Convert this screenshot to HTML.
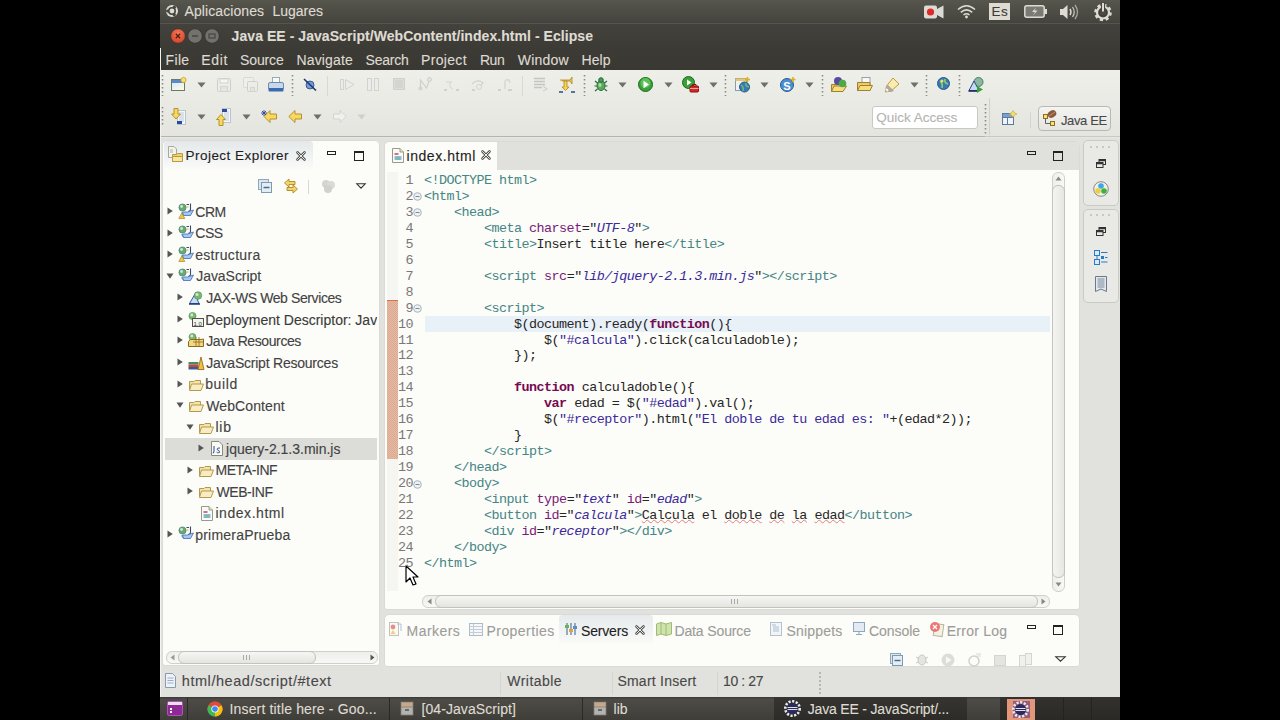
<!DOCTYPE html>
<html><head><meta charset="utf-8">
<style>
*{margin:0;padding:0;box-sizing:border-box}
html,body{width:1280px;height:720px;overflow:hidden;background:#000;font-family:"Liberation Sans",sans-serif;position:relative}
.a{position:absolute}
.t{position:absolute;white-space:pre;-webkit-text-stroke:0.12px currentColor}
svg.a{overflow:visible}
.code{position:absolute;font-family:"Liberation Mono",monospace;font-size:13.4px;line-height:15.95px;letter-spacing:-0.53px;white-space:pre;color:#262626}
.tg{color:#448585}.an{color:#7a1a78}.av{color:#3a2a9c;font-style:italic}.kw{color:#780a50;font-weight:bold}.st{color:#3a2a9c}
.sq{text-decoration:underline wavy #e08080;text-decoration-thickness:1px;text-underline-offset:0px}
.ln{position:absolute;font-family:"Liberation Mono",monospace;font-size:13.4px;line-height:15.95px;letter-spacing:-0.53px;white-space:pre;color:#787878;text-align:right;width:40px}
</style></head><body>
<div class="a" style="left:160px;top:0px;width:960px;height:720px;background:#e1e1dd"></div>
<div class="a" style="left:160px;top:0px;width:960px;height:23px;background:linear-gradient(#57564d,#44433d)"></div>
<div class="a" style="left:160px;top:23px;width:960px;height:47px;background:linear-gradient(#43423c,#3c3b36 50%,#393833)"></div>
<div class="a" style="left:160px;top:23px;width:960px;height:1px;background:#56554d"></div>
<div class="a" style="left:160px;top:70px;width:960px;height:66px;background:linear-gradient(#efefea,#e5e5e0)"></div>
<div class="a" style="left:160px;top:136px;width:825px;height:1px;background:#b4b4b1"></div>
<div class="a" style="left:985px;top:136px;width:135px;height:1px;background:#c8c8c5"></div>
<div class="a" style="left:160px;top:137px;width:960px;height:1px;background:#e6e6e3"></div>
<svg class="a" style="left:165px;top:4px;" width="14" height="14" viewBox="0 0 14 14"><circle cx="7" cy="7" r="6" fill="#dfdbd2"/><circle cx="7" cy="7" r="3.2" fill="none" stroke="#46453f" stroke-width="1.6"/><circle cx="2.6" cy="7" r="1.6" fill="#46453f"/><circle cx="9.3" cy="3.2" r="1.6" fill="#46453f"/><circle cx="9.3" cy="10.8" r="1.6" fill="#46453f"/></svg>
<div class="t" style="left:184.60px;top:3.95px;font-size:14px;line-height:14px;color:#dfdbd2;font-weight:400;font-style:normal;font-family:'Liberation Sans';letter-spacing:0.073px;">Aplicaciones</div>
<div class="t" style="left:272.60px;top:3.95px;font-size:14px;line-height:14px;color:#dfdbd2;font-weight:400;font-style:normal;font-family:'Liberation Sans';letter-spacing:-0.033px;">Lugares</div>
<svg class="a" style="left:170px;top:28px;" width="48" height="16" viewBox="0 0 48 16"><defs><radialGradient id="rg" cx="50%" cy="35%" r="60%"><stop offset="0" stop-color="#f07b5a"/><stop offset="1" stop-color="#d9452b"/></radialGradient></defs><circle cx="8" cy="8" r="7.3" fill="url(#rg)" stroke="#2e2d2a" stroke-width="0.6"/><path d="M5.8 5.8L10.2 10.2M10.2 5.8L5.8 10.2" stroke="#5a1a10" stroke-width="1.3"/><circle cx="25" cy="8" r="7.2" fill="#73726d" stroke="#2e2d2a" stroke-width="0.6"/><path d="M22 8H28" stroke="#4a4945" stroke-width="1.6"/><circle cx="42" cy="8" r="7.2" fill="#73726d" stroke="#2e2d2a" stroke-width="0.6"/><rect x="39" y="6" width="6" height="4" fill="none" stroke="#4a4945" stroke-width="1.3"/></svg>
<div class="t" style="left:231.60px;top:29.05px;font-size:14px;line-height:14px;color:#dfdbd2;font-weight:700;font-style:normal;font-family:'Liberation Sans';letter-spacing:0.059px;">Java EE - JavaScript/WebContent/index.html - Eclipse</div>
<div class="t" style="left:165.60px;top:52.95px;font-size:14px;line-height:14px;color:#dfdbd2;font-weight:400;font-style:normal;font-family:'Liberation Sans';letter-spacing:0.333px;">File</div>
<div class="t" style="left:201.20px;top:52.95px;font-size:14px;line-height:14px;color:#dfdbd2;font-weight:400;font-style:normal;font-family:'Liberation Sans';letter-spacing:0.667px;">Edit</div>
<div class="t" style="left:240.00px;top:52.95px;font-size:14px;line-height:14px;color:#dfdbd2;font-weight:400;font-style:normal;font-family:'Liberation Sans';letter-spacing:-0.120px;">Source</div>
<div class="t" style="left:296.50px;top:52.95px;font-size:14px;line-height:14px;color:#dfdbd2;font-weight:400;font-style:normal;font-family:'Liberation Sans';letter-spacing:0.143px;">Navigate</div>
<div class="t" style="left:365.50px;top:52.95px;font-size:14px;line-height:14px;color:#dfdbd2;font-weight:400;font-style:normal;font-family:'Liberation Sans';letter-spacing:-0.200px;">Search</div>
<div class="t" style="left:421.00px;top:52.95px;font-size:14px;line-height:14px;color:#dfdbd2;font-weight:400;font-style:normal;font-family:'Liberation Sans';letter-spacing:0.333px;">Project</div>
<div class="t" style="left:479.90px;top:52.95px;font-size:14px;line-height:14px;color:#dfdbd2;font-weight:400;font-style:normal;font-family:'Liberation Sans';letter-spacing:-0.400px;">Run</div>
<div class="t" style="left:517.80px;top:52.95px;font-size:14px;line-height:14px;color:#dfdbd2;font-weight:400;font-style:normal;font-family:'Liberation Sans';letter-spacing:0.200px;">Window</div>
<div class="t" style="left:581.40px;top:52.95px;font-size:14px;line-height:14px;color:#dfdbd2;font-weight:400;font-style:normal;font-family:'Liberation Sans';letter-spacing:0.133px;">Help</div>
<div class="a" style="left:162px;top:140px;width:218px;height:526px;background:#fcfcf8;border:1px solid #dadad6;border-radius:5px 5px 3px 3px"></div>
<div class="a" style="left:164px;top:141px;width:149px;height:29px;background:linear-gradient(#e4e8ea,#f4f6f5 70%,#fcfcf8);border-radius:4px 4px 0 0"></div>
<div class="a" style="left:384px;top:141px;width:696px;height:469px;background:#fcfcf8;border:1px solid #dadad6;border-radius:5px 5px 3px 3px"></div>
<div class="a" style="left:497px;top:142px;width:582px;height:28px;background:#e0e0dd;border-radius:0 4px 0 0"></div>
<div class="a" style="left:384px;top:614px;width:696px;height:53px;background:#fcfcf8;border:1px solid #dadad6;border-radius:5px 5px 3px 3px"></div>
<div class="a" style="left:559px;top:615px;width:94px;height:30px;background:linear-gradient(#e6eaec,#f4f6f5 70%,#fcfcf8);border-radius:4px 4px 0 0"></div>
<div class="a" style="left:1083px;top:140px;width:36px;height:66px;background:#e9e9e6;border:1px solid #c9c9c6;border-radius:5px"></div>
<div class="a" style="left:1083px;top:209px;width:36px;height:94px;background:#e9e9e6;border:1px solid #c9c9c6;border-radius:5px"></div>
<div class="a" style="left:160px;top:697px;width:960px;height:23px;background:linear-gradient(#3a3933,#4c4b45 10%,#45443e 60%,#3e3d38)"></div>
<div class="t" style="left:406.50px;top:149.15px;font-size:14px;line-height:14px;color:#1e1e1e;font-weight:400;font-style:normal;font-family:'Liberation Sans';letter-spacing:0.556px;">index.html</div>
<svg class="a" style="left:392px;top:148px;" width="12" height="15" viewBox="0 0 12 15"><path d="M0.5 0.5H8L11.5 4V14.5H0.5Z" fill="#fbfbf6" stroke="#9a9a8a"/><path d="M8 0.5V4H11.5" fill="#e8e4c8" stroke="#9a9a8a"/><rect x="2.5" y="5" width="4" height="2" fill="#d07090"/><rect x="2.5" y="8" width="7" height="4" fill="#6a9ad0" opacity="0.7"/><rect x="4" y="9" width="4" height="3" fill="#6abf9a" opacity="0.7"/></svg>
<svg class="a" style="left:481px;top:150px;" width="10" height="10" viewBox="0 0 10 10"><path d="M1.5 1.5L8.5 8.5M8.5 1.5L1.5 8.5" stroke="#555" stroke-width="2.6" stroke-linecap="round"/><path d="M1.5 1.5L8.5 8.5M8.5 1.5L1.5 8.5" stroke="#fcfcf8" stroke-width="0.9" stroke-linecap="round"/></svg>
<div class="a" style="left:1027px;top:151px;width:9px;height:4px;border:1.2px solid #222"></div>
<div class="a" style="left:1053px;top:151px;width:10px;height:10px;border:1.2px solid #222;border-top-width:2.4px"></div>
<div class="a" style="left:387px;top:172px;width:11px;height:419px;background:#f5f5f1"></div>
<div class="a" style="left:387px;top:300px;width:11px;height:159px;background:#dfb29c;background-image:repeating-conic-gradient(#dba890 0 25%,#e6bba6 0 50%);background-size:2px 2px"></div>
<div class="a" style="left:387px;top:300px;width:11px;height:1px;background:#e2704e"></div>
<div class="a" style="left:425px;top:316px;width:625px;height:16px;background:#e8f0f8"></div>
<div class="code" style="left:424px;top:173px"><span class="tg">&lt;!DOCTYPE html&gt;</span>
<span class="tg">&lt;html&gt;</span>
    <span class="tg">&lt;head&gt;</span>
        <span class="tg">&lt;meta </span><span class="an">charset</span>=&quot;<span class="av">UTF-8</span>&quot;<span class="tg">&gt;</span>
        <span class="tg">&lt;title&gt;</span>Insert title here<span class="tg">&lt;/title&gt;</span>

        <span class="tg">&lt;script </span><span class="an">src</span>=&quot;<span class="av">lib/jquery-2.1.3.min.js</span>&quot;<span class="tg">&gt;&lt;/script&gt;</span>

        <span class="tg">&lt;script&gt;</span>
            $(document).ready(<span class="kw">function</span>(){
                $(<span class="st">&quot;#calcula&quot;</span>).click(calculadoble);
            });

            <span class="kw">function</span> calculadoble(){
                <span class="kw">var</span> edad = $(<span class="st">&quot;#edad&quot;</span>).val();
                $(<span class="st">&quot;#receptor&quot;</span>).html(<span class="st">&quot;El doble de tu edad es: &quot;</span>+(edad*2));
            }
        <span class="tg">&lt;/script&gt;</span>
    <span class="tg">&lt;/head&gt;</span>
    <span class="tg">&lt;body&gt;</span>
        <span class="tg">&lt;input </span><span class="an">type</span>=&quot;<span class="av">text</span>&quot; <span class="an">id</span>=&quot;<span class="av">edad</span>&quot;<span class="tg">&gt;</span>
        <span class="tg">&lt;button </span><span class="an">id</span>=&quot;<span class="av">calcula</span>&quot;<span class="tg">&gt;</span><span class="sq">Calcula</span> el <span class="sq">doble</span> <span class="sq">de</span> <span class="sq">la</span> <span class="sq">edad</span><span class="tg">&lt;/button&gt;</span>
        <span class="tg">&lt;div </span><span class="an">id</span>=&quot;<span class="av">receptor</span>&quot;<span class="tg">&gt;&lt;/div&gt;</span>
    <span class="tg">&lt;/body&gt;</span>
<span class="tg">&lt;/html&gt;</span></div>
<div class="ln" style="left:373px;top:173px">1
2
3
4
5
6
7
8
9
10
11
12
13
14
15
16
17
18
19
20
21
22
23
24
25</div>
<svg class="a" style="left:413px;top:192px;" width="9" height="9" viewBox="0 0 9 9"><circle cx="4.5" cy="4.5" r="3.8" fill="#eef2f4" stroke="#a8b4bc" stroke-width="1"/><path d="M2.5 4.5H6.5" stroke="#7a8890" stroke-width="1"/></svg>
<svg class="a" style="left:413px;top:208px;" width="9" height="9" viewBox="0 0 9 9"><circle cx="4.5" cy="4.5" r="3.8" fill="#eef2f4" stroke="#a8b4bc" stroke-width="1"/><path d="M2.5 4.5H6.5" stroke="#7a8890" stroke-width="1"/></svg>
<svg class="a" style="left:413px;top:304px;" width="9" height="9" viewBox="0 0 9 9"><circle cx="4.5" cy="4.5" r="3.8" fill="#eef2f4" stroke="#a8b4bc" stroke-width="1"/><path d="M2.5 4.5H6.5" stroke="#7a8890" stroke-width="1"/></svg>
<svg class="a" style="left:413px;top:480px;" width="9" height="9" viewBox="0 0 9 9"><circle cx="4.5" cy="4.5" r="3.8" fill="#eef2f4" stroke="#a8b4bc" stroke-width="1"/><path d="M2.5 4.5H6.5" stroke="#7a8890" stroke-width="1"/></svg>
<div class="a" style="left:1052px;top:172px;width:13px;height:420px;background:linear-gradient(90deg,#eeeeeb,#f8f8f6);border:1px solid #cfcfcc;border-radius:6px"></div>
<div class="a" style="left:1052px;top:185px;width:13px;height:393px;background:linear-gradient(90deg,#f4f4f2,#e6e6e3);border:1px solid #c2c2bf;border-radius:6px"></div>
<svg class="a" style="left:1055px;top:176px;" width="7" height="5" viewBox="0 0 7 5"><path d="M0.5 4.5L3.5 0.5L6.5 4.5Z" fill="#888"/></svg>
<svg class="a" style="left:1055px;top:582px;" width="7" height="5" viewBox="0 0 7 5"><path d="M0.5 0.5L3.5 4.5L6.5 0.5Z" fill="#888"/></svg>
<div class="a" style="left:422px;top:595px;width:628px;height:13px;background:linear-gradient(#eeeeeb,#f8f8f6);border:1px solid #cfcfcc;border-radius:6px"></div>
<div class="a" style="left:435px;top:595px;width:603px;height:13px;background:linear-gradient(#f6f6f4,#e4e4e1);border:1px solid #c2c2bf;border-radius:6px"></div>
<svg class="a" style="left:427px;top:598px;" width="5" height="7" viewBox="0 0 5 7"><path d="M4.5 0.5L0.5 3.5L4.5 6.5Z" fill="#888"/></svg>
<svg class="a" style="left:1041px;top:598px;" width="5" height="7" viewBox="0 0 5 7"><path d="M0.5 0.5L4.5 3.5L0.5 6.5Z" fill="#888"/></svg>
<svg class="a" style="left:730px;top:599px;" width="9" height="5" viewBox="0 0 9 5"><path d="M1.5 0V5M4.5 0V5M7.5 0V5" stroke="#aaa" stroke-width="1"/></svg>
<svg class="a" style="left:405px;top:565px;" width="14" height="21" viewBox="0 0 14 21"><path d="M1 1V17L5 13L8 20L11 19L8 12H13Z" fill="#fff" stroke="#000" stroke-width="1.2" stroke-linejoin="round"/></svg>
<div class="t" style="left:185.50px;top:149.37px;font-size:13.5px;line-height:13.5px;color:#1e1e1e;font-weight:400;font-style:normal;font-family:'Liberation Sans';letter-spacing:0.467px;">Project Explorer</div>
<svg class="a" style="left:168px;top:146px;" width="16" height="17" viewBox="0 0 16 17"><path d="M0.5 0.5H6L8.5 3V11.5H0.5Z" fill="#f4f4ee" stroke="#a8a898"/><path d="M2 4H5M2 6H5" stroke="#b0b0a0"/><path d="M4.5 8.5H8.5L9.5 7.5H14.5V15.5H4.5Z" fill="#f0d070" stroke="#b89a40"/><path d="M4.5 10.5H14.5V15.5H4.5Z" fill="#f8e6a0" stroke="#b89a40"/></svg>
<svg class="a" style="left:296px;top:151px;" width="10" height="10" viewBox="0 0 10 10"><path d="M1.5 1.5L8.5 8.5M8.5 1.5L1.5 8.5" stroke="#555" stroke-width="2.6" stroke-linecap="round"/><path d="M1.5 1.5L8.5 8.5M8.5 1.5L1.5 8.5" stroke="#fcfcf8" stroke-width="0.9" stroke-linecap="round"/></svg>
<div class="a" style="left:327px;top:151px;width:9px;height:4px;border:1.2px solid #222"></div>
<div class="a" style="left:354px;top:151px;width:10px;height:10px;border:1.2px solid #222;border-top-width:2.4px"></div>
<svg class="a" style="left:258px;top:179px;" width="14" height="14" viewBox="0 0 14 14"><rect x="0.5" y="0.5" width="10" height="10" fill="#dbe6ef" stroke="#90a8bc"/><rect x="3.5" y="3.5" width="10" height="10" fill="#e4edf4" stroke="#7d9ab2"/><path d="M5.5 8.5H11.5" stroke="#4a6a8a" stroke-width="1.5"/></svg>
<svg class="a" style="left:283px;top:178px;" width="16" height="16" viewBox="0 0 16 16"><path d="M6 1L1.5 5L6 9V6.5H12V3.5H6Z" fill="#f4d46a" stroke="#b08a20" stroke-width="0.9"/><path d="M10 7L14.5 11L10 15V12.5H4V9.5H10Z" fill="#f4d46a" stroke="#b08a20" stroke-width="0.9"/></svg>
<div class="a" style="left:308px;top:180px;width:1px;height:14px;background:#d8d8d4"></div>
<svg class="a" style="left:321px;top:179px;" width="15" height="15" viewBox="0 0 15 15"><circle cx="5" cy="5" r="4" fill="#d4d4d0"/><circle cx="10" cy="6" r="4" fill="#dadad6"/><circle cx="7" cy="10" r="4" fill="#d0d0cc"/></svg>
<svg class="a" style="left:356px;top:183px;" width="10" height="6" viewBox="0 0 10 6"><path d="M0.8 0.8H9.2L5 5.2Z" fill="#fcfcf8" stroke="#333" stroke-width="1.1"/></svg>
<div class="a" style="left:165px;top:438px;width:212px;height:22px;background:#dcdcd8"></div>
<svg class="a" style="left:166.5px;top:207px;" width="6" height="8" viewBox="0 0 6 8"><path d="M0.5 0.5L5.8 4L0.5 7.5Z" fill="#555"/></svg>
<svg class="a" style="left:178.2px;top:203px;" width="16" height="16" viewBox="0 0 16 16"><circle cx="4.5" cy="4.5" r="3.6" fill="#6aa87a" stroke="#3a7a5a" stroke-width="0.6"/><circle cx="3.6" cy="3.5" r="1.4" fill="#c8e8d0"/><path d="M8.5 1.5H11M12.5 0.5V6.5Q12.5 8.5 10 8.5" stroke="#3a4a6a" stroke-width="1.1" fill="none"/><path d="M8.5 4H10.5" stroke="#e0b040" stroke-width="1"/><path d="M4.5 9H9.5L15.5 7L12.5 12.5H5.5Z" fill="#a8c8f0" stroke="#4a7ac0" stroke-width="0.9"/><path d="M5.5 12.5L3.5 9.5" stroke="#4a7ac0" stroke-width="0.9"/><path d="M0.8 15.5L3.8 10L6.8 15.5Z" fill="#f0c848" stroke="#b08a20" stroke-width="0.7"/></svg>
<div class="t" style="left:195.20px;top:204.75px;font-size:14px;line-height:14px;color:#424242;font-weight:400;font-style:normal;font-family:'Liberation Sans';letter-spacing:-0.400px;">CRM</div>
<svg class="a" style="left:166.5px;top:229px;" width="6" height="8" viewBox="0 0 6 8"><path d="M0.5 0.5L5.8 4L0.5 7.5Z" fill="#555"/></svg>
<svg class="a" style="left:178.2px;top:225px;" width="16" height="16" viewBox="0 0 16 16"><circle cx="4.5" cy="4.5" r="3.6" fill="#6aa87a" stroke="#3a7a5a" stroke-width="0.6"/><circle cx="3.6" cy="3.5" r="1.4" fill="#c8e8d0"/><path d="M8.5 1.5H11M12.5 0.5V6.5Q12.5 8.5 10 8.5" stroke="#3a4a6a" stroke-width="1.1" fill="none"/><path d="M8.5 4H10.5" stroke="#e0b040" stroke-width="1"/><path d="M4.5 9H9.5L15.5 7L12.5 12.5H5.5Z" fill="#a8c8f0" stroke="#4a7ac0" stroke-width="0.9"/><path d="M5.5 12.5L3.5 9.5" stroke="#4a7ac0" stroke-width="0.9"/></svg>
<div class="t" style="left:195.20px;top:226.30px;font-size:14px;line-height:14px;color:#424242;font-weight:400;font-style:normal;font-family:'Liberation Sans';letter-spacing:-0.400px;">CSS</div>
<svg class="a" style="left:166.5px;top:250px;" width="6" height="8" viewBox="0 0 6 8"><path d="M0.5 0.5L5.8 4L0.5 7.5Z" fill="#555"/></svg>
<svg class="a" style="left:178.2px;top:246px;" width="16" height="16" viewBox="0 0 16 16"><circle cx="4.5" cy="4.5" r="3.6" fill="#6aa87a" stroke="#3a7a5a" stroke-width="0.6"/><circle cx="3.6" cy="3.5" r="1.4" fill="#c8e8d0"/><path d="M8.5 1.5H11M12.5 0.5V6.5Q12.5 8.5 10 8.5" stroke="#3a4a6a" stroke-width="1.1" fill="none"/><path d="M8.5 4H10.5" stroke="#e0b040" stroke-width="1"/><path d="M4.5 9H9.5L15.5 7L12.5 12.5H5.5Z" fill="#a8c8f0" stroke="#4a7ac0" stroke-width="0.9"/><path d="M5.5 12.5L3.5 9.5" stroke="#4a7ac0" stroke-width="0.9"/><path d="M0.8 15.5L3.8 10L6.8 15.5Z" fill="#f0c848" stroke="#b08a20" stroke-width="0.7"/></svg>
<div class="t" style="left:195.20px;top:247.85px;font-size:14px;line-height:14px;color:#424242;font-weight:400;font-style:normal;font-family:'Liberation Sans';letter-spacing:0.306px;">estructura</div>
<svg class="a" style="left:165.5px;top:273px;" width="8" height="6" viewBox="0 0 8 6"><path d="M0.5 0.5H7.5L4 5.8Z" fill="#555"/></svg>
<svg class="a" style="left:178.2px;top:268px;" width="16" height="16" viewBox="0 0 16 16"><circle cx="4.5" cy="4.5" r="3.6" fill="#6aa87a" stroke="#3a7a5a" stroke-width="0.6"/><circle cx="3.6" cy="3.5" r="1.4" fill="#c8e8d0"/><path d="M8.5 1.5H11M12.5 0.5V6.5Q12.5 8.5 10 8.5" stroke="#3a4a6a" stroke-width="1.1" fill="none"/><path d="M8.5 4H10.5" stroke="#e0b040" stroke-width="1"/><path d="M4.5 9H9.5L15.5 7L12.5 12.5H5.5Z" fill="#a8c8f0" stroke="#4a7ac0" stroke-width="0.9"/><path d="M5.5 12.5L3.5 9.5" stroke="#4a7ac0" stroke-width="0.9"/></svg>
<div class="t" style="left:196.20px;top:269.40px;font-size:14px;line-height:14px;color:#424242;font-weight:400;font-style:normal;font-family:'Liberation Sans';letter-spacing:-0.044px;">JavaScript</div>
<svg class="a" style="left:176.8px;top:293px;" width="6" height="8" viewBox="0 0 6 8"><path d="M0.5 0.5L5.8 4L0.5 7.5Z" fill="#555"/></svg>
<svg class="a" style="left:188.2px;top:289px;" width="16" height="16" viewBox="0 0 16 16"><path d="M1.5 14.5L7 5L11 14.5Z" fill="#c8dcf4" stroke="#3a5a9a"/><circle cx="10" cy="6.5" r="3.8" fill="#7ab870" stroke="#4a8a60" stroke-width="0.6"/><circle cx="9" cy="5.5" r="1.5" fill="#d0ecc8"/><path d="M1 15H12" stroke="#1a3a7a" stroke-width="1.5"/></svg>
<div class="t" style="left:206.20px;top:290.95px;font-size:14px;line-height:14px;color:#424242;font-weight:400;font-style:normal;font-family:'Liberation Sans';letter-spacing:-0.400px;">JAX-WS Web Services</div>
<svg class="a" style="left:176.8px;top:315px;" width="6" height="8" viewBox="0 0 6 8"><path d="M0.5 0.5L5.8 4L0.5 7.5Z" fill="#555"/></svg>
<svg class="a" style="left:188.2px;top:311px;" width="16" height="16" viewBox="0 0 16 16"><circle cx="4.5" cy="5" r="3.6" fill="#7ab870" stroke="#4a8a60" stroke-width="0.6"/><circle cx="3.8" cy="4" r="1.4" fill="#d0ecc8"/><rect x="4.5" y="7.5" width="11" height="8" fill="#f4f4ee" stroke="#505048"/><text x="5.5" y="14.5" font-size="6" font-family="Liberation Sans" fill="#333">1.0</text></svg>
<div class="a" style="left:205.2px;top:308px;width:171.8px;height:20px;overflow:hidden">
<div class="t" style="left:0.00px;top:4.50px;font-size:14px;line-height:14px;color:#3a3a3a;font-weight:400;font-style:normal;font-family:'Liberation Sans';letter-spacing:0.000px;">Deployment Descriptor: JavaScript</div>
</div>
<svg class="a" style="left:176.8px;top:336px;" width="6" height="8" viewBox="0 0 6 8"><path d="M0.5 0.5L5.8 4L0.5 7.5Z" fill="#555"/></svg>
<svg class="a" style="left:188.2px;top:332px;" width="16" height="16" viewBox="0 0 16 16"><circle cx="4.5" cy="5" r="3.5" fill="#7ab870" stroke="#4a8a60" stroke-width="0.6"/><circle cx="3.8" cy="4" r="1.4" fill="#d0ecc8"/><path d="M0.5 9.5L2.5 7.5H13L15.5 7V14.5H0.5Z" fill="#f4d880" stroke="#8a6a20"/><path d="M8 5V14M11 5V14M5 10H15" stroke="#8a6a20" stroke-width="0.8"/></svg>
<div class="t" style="left:206.20px;top:334.05px;font-size:14px;line-height:14px;color:#424242;font-weight:400;font-style:normal;font-family:'Liberation Sans';letter-spacing:-0.400px;">Java Resources</div>
<svg class="a" style="left:176.8px;top:358px;" width="6" height="8" viewBox="0 0 6 8"><path d="M0.5 0.5L5.8 4L0.5 7.5Z" fill="#555"/></svg>
<svg class="a" style="left:188.2px;top:354px;" width="16" height="16" viewBox="0 0 16 16"><rect x="0.5" y="8" width="10" height="2.5" fill="#4a8a5a"/><rect x="0.5" y="10.5" width="10" height="2.5" fill="#c04a3a"/><rect x="0.5" y="13" width="10" height="2.5" fill="#3a5a9a"/><path d="M10 15.5L13 3L16 15.5Z" fill="#f0c040" stroke="#906010" stroke-width="0.8"/></svg>
<div class="t" style="left:206.20px;top:355.60px;font-size:14px;line-height:14px;color:#424242;font-weight:400;font-style:normal;font-family:'Liberation Sans';letter-spacing:-0.221px;">JavaScript Resources</div>
<svg class="a" style="left:176.8px;top:380px;" width="6" height="8" viewBox="0 0 6 8"><path d="M0.5 0.5L5.8 4L0.5 7.5Z" fill="#555"/></svg>
<svg class="a" style="left:188.7px;top:380px;" width="15" height="11" viewBox="0 0 15 11"><path d="M0.5 1.5H5L6 0.5H11.5V9.5H0.5Z" fill="#f4e2a8" stroke="#b49a50"/><path d="M0.5 10.5L2.5 4H14.5L12 10.5Z" fill="#f8ecc0" stroke="#b49a50"/></svg>
<div class="t" style="left:205.20px;top:377.15px;font-size:14px;line-height:14px;color:#424242;font-weight:400;font-style:normal;font-family:'Liberation Sans';letter-spacing:0.600px;">build</div>
<svg class="a" style="left:175.8px;top:402px;" width="8" height="6" viewBox="0 0 8 6"><path d="M0.5 0.5H7.5L4 5.8Z" fill="#555"/></svg>
<svg class="a" style="left:188.7px;top:401px;" width="15" height="11" viewBox="0 0 15 11"><path d="M0.5 1.5H5L6 0.5H11.5V9.5H0.5Z" fill="#f4e2a8" stroke="#b49a50"/><path d="M0.5 10.5L2.5 4H14.5L12 10.5Z" fill="#f8ecc0" stroke="#b49a50"/></svg>
<div class="t" style="left:206.20px;top:398.70px;font-size:14px;line-height:14px;color:#424242;font-weight:400;font-style:normal;font-family:'Liberation Sans';letter-spacing:0.111px;">WebContent</div>
<svg class="a" style="left:186.1px;top:424px;" width="8" height="6" viewBox="0 0 8 6"><path d="M0.5 0.5H7.5L4 5.8Z" fill="#555"/></svg>
<svg class="a" style="left:198.9px;top:423px;" width="15" height="11" viewBox="0 0 15 11"><path d="M0.5 1.5H5L6 0.5H11.5V9.5H0.5Z" fill="#f4e2a8" stroke="#b49a50"/><path d="M0.5 10.5L2.5 4H14.5L12 10.5Z" fill="#f8ecc0" stroke="#b49a50"/></svg>
<div class="t" style="left:215.40px;top:420.25px;font-size:14px;line-height:14px;color:#424242;font-weight:400;font-style:normal;font-family:'Liberation Sans';letter-spacing:0.800px;">lib</div>
<svg class="a" style="left:197.5px;top:444px;" width="6" height="8" viewBox="0 0 6 8"><path d="M0.5 0.5L5.8 4L0.5 7.5Z" fill="#555"/></svg>
<svg class="a" style="left:211.1px;top:441px;" width="12" height="15" viewBox="0 0 12 15"><path d="M0.5 0.5H8L11.5 4V14.5H0.5Z" fill="#fbfbf6" stroke="#8a8a7a"/><path d="M3 5V10Q3 12 1.8 12" stroke="#3a5aa0" stroke-width="1.1" fill="none"/><path d="M9 7Q6 6.5 6 8.5Q9 9.5 8.5 11.5Q6.5 12.5 5.5 11" stroke="#3a5aa0" stroke-width="1" fill="none"/></svg>
<div class="t" style="left:226.10px;top:441.80px;font-size:14px;line-height:14px;color:#424242;font-weight:400;font-style:normal;font-family:'Liberation Sans';letter-spacing:0.000px;">jquery-2.1.3.min.js</div>
<svg class="a" style="left:187.1px;top:466px;" width="6" height="8" viewBox="0 0 6 8"><path d="M0.5 0.5L5.8 4L0.5 7.5Z" fill="#555"/></svg>
<svg class="a" style="left:198.9px;top:466px;" width="15" height="11" viewBox="0 0 15 11"><path d="M0.5 1.5H5L6 0.5H11.5V9.5H0.5Z" fill="#f4e2a8" stroke="#b49a50"/><path d="M0.5 10.5L2.5 4H14.5L12 10.5Z" fill="#f8ecc0" stroke="#b49a50"/></svg>
<div class="t" style="left:215.40px;top:463.35px;font-size:14px;line-height:14px;color:#424242;font-weight:400;font-style:normal;font-family:'Liberation Sans';letter-spacing:-0.400px;">META-INF</div>
<svg class="a" style="left:187.1px;top:487px;" width="6" height="8" viewBox="0 0 6 8"><path d="M0.5 0.5L5.8 4L0.5 7.5Z" fill="#555"/></svg>
<svg class="a" style="left:198.9px;top:487px;" width="15" height="11" viewBox="0 0 15 11"><path d="M0.5 1.5H5L6 0.5H11.5V9.5H0.5Z" fill="#f4e2a8" stroke="#b49a50"/><path d="M0.5 10.5L2.5 4H14.5L12 10.5Z" fill="#f8ecc0" stroke="#b49a50"/></svg>
<div class="t" style="left:216.40px;top:484.90px;font-size:14px;line-height:14px;color:#424242;font-weight:400;font-style:normal;font-family:'Liberation Sans';letter-spacing:-0.400px;">WEB-INF</div>
<svg class="a" style="left:201.4px;top:506px;" width="12" height="15" viewBox="0 0 12 15"><path d="M0.5 0.5H8L11.5 4V14.5H0.5Z" fill="#fbfbf6" stroke="#9a9a8a"/><path d="M8 0.5V4H11.5" fill="#e8e4c8" stroke="#9a9a8a"/><rect x="2.5" y="5" width="4" height="2" fill="#d07090"/><rect x="2.5" y="8" width="7" height="4" fill="#6a9ad0" opacity="0.7"/><rect x="4" y="9" width="4" height="3" fill="#6abf9a" opacity="0.7"/></svg>
<div class="t" style="left:215.40px;top:506.45px;font-size:14px;line-height:14px;color:#424242;font-weight:400;font-style:normal;font-family:'Liberation Sans';letter-spacing:0.556px;">index.html</div>
<svg class="a" style="left:166.5px;top:530px;" width="6" height="8" viewBox="0 0 6 8"><path d="M0.5 0.5L5.8 4L0.5 7.5Z" fill="#555"/></svg>
<svg class="a" style="left:178.2px;top:526px;" width="16" height="16" viewBox="0 0 16 16"><circle cx="4.5" cy="4.5" r="3.6" fill="#6aa87a" stroke="#3a7a5a" stroke-width="0.6"/><circle cx="3.6" cy="3.5" r="1.4" fill="#c8e8d0"/><path d="M8.5 1.5H11M12.5 0.5V6.5Q12.5 8.5 10 8.5" stroke="#3a4a6a" stroke-width="1.1" fill="none"/><path d="M8.5 4H10.5" stroke="#e0b040" stroke-width="1"/><path d="M4.5 9H9.5L15.5 7L12.5 12.5H5.5Z" fill="#a8c8f0" stroke="#4a7ac0" stroke-width="0.9"/><path d="M5.5 12.5L3.5 9.5" stroke="#4a7ac0" stroke-width="0.9"/></svg>
<div class="t" style="left:195.20px;top:528.00px;font-size:14px;line-height:14px;color:#424242;font-weight:400;font-style:normal;font-family:'Liberation Sans';letter-spacing:0.217px;">primeraPrueba</div>
<div class="a" style="left:166px;top:651px;width:212px;height:13px;background:linear-gradient(#eeeeeb,#f8f8f6);border:1px solid #cfcfcc;border-radius:6px"></div>
<div class="a" style="left:178px;top:651px;width:138px;height:13px;background:linear-gradient(#f6f6f4,#e4e4e1);border:1px solid #c2c2bf;border-radius:6px"></div>
<svg class="a" style="left:170px;top:654px;" width="5" height="7" viewBox="0 0 5 7"><path d="M4.5 0.5L0.5 3.5L4.5 6.5Z" fill="#999"/></svg>
<svg class="a" style="left:370px;top:654px;" width="5" height="7" viewBox="0 0 5 7"><path d="M0.5 0.5L4.5 3.5L0.5 6.5Z" fill="#555"/></svg>
<svg class="a" style="left:242px;top:655px;" width="9" height="5" viewBox="0 0 9 5"><path d="M1.5 0V5M4.5 0V5M7.5 0V5" stroke="#aaa" stroke-width="1"/></svg>
<svg class="a" style="left:389px;top:622px;opacity:0.75" width="13" height="15" viewBox="0 0 13 15"><rect x="0.5" y="0.5" width="9" height="13" fill="#f8f8f2" stroke="#b0b0a8"/><circle cx="4" cy="5" r="2.4" fill="#e06a6a"/><path d="M1.5 12L4 8L6.5 12Z" fill="#f0c050"/><path d="M8 2H12V9" stroke="#90b0d0" fill="none"/></svg>
<div class="t" style="left:406.60px;top:623.75px;font-size:14px;line-height:14px;color:#9c9c9a;font-weight:400;font-style:normal;font-family:'Liberation Sans';letter-spacing:0.450px;">Markers</div>
<svg class="a" style="left:469px;top:623px;opacity:0.8" width="14" height="13" viewBox="0 0 14 13"><rect x="0.5" y="0.5" width="13" height="12" fill="#f4f6f8" stroke="#9aaabb"/><path d="M0.5 3.5H13.5M0.5 6.5H13.5M0.5 9.5H13.5M4.5 0.5V12.5" stroke="#b4c2d0"/></svg>
<div class="t" style="left:486.50px;top:623.75px;font-size:14px;line-height:14px;color:#9c9c9a;font-weight:400;font-style:normal;font-family:'Liberation Sans';letter-spacing:0.444px;">Properties</div>
<svg class="a" style="left:564px;top:622px;" width="14" height="14" viewBox="0 0 14 14"><path d="M3 1V13M7 1V13M11 1V13" stroke="#5a7a9a" stroke-width="1.2"/><rect x="1" y="3" width="4" height="3" fill="#6ab060"/><rect x="5" y="7" width="4" height="3" fill="#e0a040"/><rect x="9" y="4" width="4" height="3" fill="#5a8ad0"/></svg>
<div class="t" style="left:581.00px;top:623.75px;font-size:14px;line-height:14px;color:#1e1e1e;font-weight:400;font-style:normal;font-family:'Liberation Sans';letter-spacing:-0.167px;">Servers</div>
<svg class="a" style="left:635px;top:625px;" width="10" height="10" viewBox="0 0 10 10"><path d="M1.5 1.5L8.5 8.5M8.5 1.5L1.5 8.5" stroke="#555" stroke-width="2.6" stroke-linecap="round"/><path d="M1.5 1.5L8.5 8.5M8.5 1.5L1.5 8.5" stroke="#fcfcf8" stroke-width="0.9" stroke-linecap="round"/></svg>
<svg class="a" style="left:656px;top:622px;opacity:0.85" width="16" height="14" viewBox="0 0 16 14"><path d="M0.5 2L5 0.5L10 2L15.5 0.5V12L10 13.5L5 12L0.5 13.5Z" fill="#c8e0a0" stroke="#90b060"/><path d="M5 0.5V12M10 2V13.5" stroke="#90b060"/></svg>
<div class="t" style="left:674.40px;top:623.75px;font-size:14px;line-height:14px;color:#9c9c9a;font-weight:400;font-style:normal;font-family:'Liberation Sans';letter-spacing:-0.120px;">Data Source</div>
<svg class="a" style="left:770px;top:622px;opacity:0.8" width="13" height="15" viewBox="0 0 13 15"><rect x="0.5" y="0.5" width="11" height="13" fill="#f0f4f8" stroke="#a0b4c8"/><path d="M2 3H6M3 5H9M3 7H9M3 9H9" stroke="#98b0c8"/></svg>
<div class="t" style="left:786.50px;top:623.75px;font-size:14px;line-height:14px;color:#9c9c9a;font-weight:400;font-style:normal;font-family:'Liberation Sans';letter-spacing:0.186px;">Snippets</div>
<svg class="a" style="left:853px;top:622px;opacity:0.85" width="12" height="14" viewBox="0 0 12 14"><rect x="0.5" y="0.5" width="11" height="9" fill="#dfe8f2" stroke="#7a9ab8"/><path d="M3 12.5H9M6 9.5V12.5" stroke="#7a9ab8"/></svg>
<div class="t" style="left:869.00px;top:623.75px;font-size:14px;line-height:14px;color:#9c9c9a;font-weight:400;font-style:normal;font-family:'Liberation Sans';letter-spacing:-0.067px;">Console</div>
<svg class="a" style="left:929px;top:621px;opacity:0.85" width="15" height="16" viewBox="0 0 15 16"><rect x="5" y="3" width="9" height="12" fill="#f4f0e0" stroke="#b0a890" transform="rotate(8 9 9)"/><circle cx="6" cy="6" r="5" fill="#e86060"/><path d="M4 4L8 8M8 4L4 8" stroke="#fff" stroke-width="1.2"/></svg>
<div class="t" style="left:946.80px;top:623.75px;font-size:14px;line-height:14px;color:#9c9c9a;font-weight:400;font-style:normal;font-family:'Liberation Sans';letter-spacing:0.225px;">Error Log</div>
<div class="a" style="left:1027px;top:625px;width:9px;height:4px;border:1.2px solid #222"></div>
<div class="a" style="left:1053px;top:625px;width:10px;height:10px;border:1.2px solid #222;border-top-width:2.4px"></div>
<svg class="a" style="left:890px;top:653px;" width="13" height="13" viewBox="0 0 13 13"><rect x="0.5" y="0.5" width="10" height="10" fill="#dbe6ef" stroke="#90a8bc"/><rect x="2.5" y="2.5" width="10" height="10" fill="#e4edf4" stroke="#7d9ab2"/><path d="M4.5 7.5H10.5" stroke="#4a6a8a" stroke-width="1.4"/></svg>
<svg class="a" style="left:915px;top:653px;" width="14" height="13" viewBox="0 0 14 13"><ellipse cx="7" cy="7" rx="4" ry="5" fill="#e4e4e0" stroke="#c8c8c4"/><path d="M1 4L4 6M13 4L10 6M1 10L3.5 9M13 10L10.5 9" stroke="#c8c8c4"/></svg>
<svg class="a" style="left:941px;top:653px;" width="14" height="14" viewBox="0 0 14 14"><circle cx="7" cy="7" r="6.5" fill="#dcdcd8"/><path d="M5 3.5L10.5 7L5 10.5Z" fill="#f8f8f6"/></svg>
<svg class="a" style="left:967px;top:653px;" width="15" height="14" viewBox="0 0 15 14"><circle cx="7" cy="8" r="5" fill="none" stroke="#d0d0cc" stroke-width="1.5"/><path d="M9 1H14M10 3H14" stroke="#d8d8d4"/></svg>
<svg class="a" style="left:994px;top:655px;" width="12" height="11" viewBox="0 0 12 11"><rect x="0.5" y="0.5" width="11" height="10" fill="#e4e4e0" stroke="#d4d4d0"/></svg>
<svg class="a" style="left:1019px;top:653px;" width="14" height="14" viewBox="0 0 14 14"><rect x="0.5" y="2.5" width="6" height="11" fill="#f0f0ec" stroke="#d4d4d0"/><rect x="6.5" y="0.5" width="6" height="11" fill="#f0f0ec" stroke="#d4d4d0"/></svg>
<svg class="a" style="left:1055px;top:656px;" width="11" height="6" viewBox="0 0 11 6"><path d="M0.8 0.8H10.2L5.5 5.2Z" fill="#fcfcf8" stroke="#333" stroke-width="1.1"/></svg>
<svg class="a" style="left:165px;top:673px;" width="11" height="15" viewBox="0 0 11 15"><path d="M0.5 0.5H7.5L10.5 3.5V14.5H0.5Z" fill="#eef2f6" stroke="#8a9ab0"/><path d="M2.5 5H8.5M2.5 7.5H8.5M2.5 10H8.5" stroke="#9ab0c8"/></svg>
<div class="t" style="left:181.80px;top:674.03px;font-size:14.5px;line-height:14.5px;color:#484848;font-weight:400;font-style:normal;font-family:'Liberation Sans';letter-spacing:0.548px;">html/head/script/#text</div>
<div class="a" style="left:500px;top:672px;width:1px;height:23px;background:#d4d4d1"></div>
<div class="a" style="left:612px;top:672px;width:1px;height:23px;background:#d4d4d1"></div>
<div class="a" style="left:717px;top:672px;width:1px;height:23px;background:#d4d4d1"></div>
<svg class="a" style="left:819px;top:672px;" width="2" height="24" viewBox="0 0 2 24"><path d="M1 0V24" stroke="#9a9a96" stroke-width="1.2" stroke-dasharray="2 2"/></svg>
<div class="t" style="left:507.30px;top:674.45px;font-size:14px;line-height:14px;color:#484848;font-weight:400;font-style:normal;font-family:'Liberation Sans';letter-spacing:0.457px;">Writable</div>
<div class="t" style="left:617.40px;top:674.45px;font-size:14px;line-height:14px;color:#484848;font-weight:400;font-style:normal;font-family:'Liberation Sans';letter-spacing:0.236px;">Smart Insert</div>
<div class="t" style="left:723.00px;top:674.45px;font-size:14px;line-height:14px;color:#484848;font-weight:400;font-style:normal;font-family:'Liberation Sans';letter-spacing:-0.400px;">10 : 27</div>
<div class="a" style="left:774px;top:697px;width:193px;height:23px;background:linear-gradient(#363531,#2c2b28)"></div>
<div class="a" style="left:1000px;top:697px;width:120px;height:23px;background:linear-gradient(#33322e,#2a2926)"></div>
<div class="a" style="left:187px;top:698px;width:1px;height:22px;background:#2a2926"></div>
<div class="a" style="left:389px;top:698px;width:1px;height:22px;background:#2a2926"></div>
<div class="a" style="left:582px;top:698px;width:1px;height:22px;background:#2a2926"></div>
<div class="a" style="left:1063px;top:698px;width:1px;height:22px;background:#242320"></div>
<div class="a" style="left:1091px;top:698px;width:1px;height:22px;background:#242320"></div>
<svg class="a" style="left:167px;top:701px;" width="16" height="15" viewBox="0 0 16 15"><rect x="0.5" y="0.5" width="15" height="14" rx="1.5" fill="#8e2a96" stroke="#b050b8"/><rect x="1" y="1" width="14" height="3" fill="#f0dcf0"/><rect x="3" y="7" width="2" height="2" fill="#fff"/><rect x="3" y="10" width="2" height="2" fill="#fff"/></svg>
<svg class="a" style="left:207px;top:701px;" width="16" height="16" viewBox="0 0 16 16"><circle cx="8" cy="8" r="7.5" fill="#dd4b39"/><path d="M8 8L1.5 4.2A7.5 7.5 0 0 1 14.5 4.2Z" fill="#dd4b39"/><path d="M8 8L14.5 4.2A7.5 7.5 0 0 1 8 15.5Z" fill="#f4c20d"/><path d="M8 8L8 15.5A7.5 7.5 0 0 1 1.5 4.2Z" fill="#3cba54"/><circle cx="8" cy="8" r="3.6" fill="#fff"/><circle cx="8" cy="8" r="2.8" fill="#4285f4"/></svg>
<div class="t" style="left:229.50px;top:701.65px;font-size:14px;line-height:14px;color:#dfdbd2;font-weight:400;font-style:normal;font-family:'Liberation Sans';letter-spacing:0.160px;">Insert title here - Goo...</div>
<svg class="a" style="left:400px;top:701px;" width="14" height="15" viewBox="0 0 14 15"><rect x="0.5" y="0.5" width="13" height="14" rx="1" fill="#8a8984" stroke="#5a5954"/><rect x="1.5" y="1.5" width="11" height="4" fill="#c8a888"/><rect x="1.5" y="6.5" width="11" height="7" fill="#b4b3ae"/><rect x="5" y="8" width="4" height="2" fill="#6a6964"/></svg>
<div class="t" style="left:421.50px;top:701.65px;font-size:14px;line-height:14px;color:#dfdbd2;font-weight:400;font-style:normal;font-family:'Liberation Sans';letter-spacing:0.071px;">[04-JavaScript]</div>
<svg class="a" style="left:593px;top:701px;" width="14" height="15" viewBox="0 0 14 15"><rect x="0.5" y="0.5" width="13" height="14" rx="1" fill="#8a8984" stroke="#5a5954"/><rect x="1.5" y="1.5" width="11" height="4" fill="#c8a888"/><rect x="1.5" y="6.5" width="11" height="7" fill="#b4b3ae"/><rect x="5" y="8" width="4" height="2" fill="#6a6964"/></svg>
<div class="t" style="left:613.60px;top:701.65px;font-size:14px;line-height:14px;color:#dfdbd2;font-weight:400;font-style:normal;font-family:'Liberation Sans';letter-spacing:0.000px;">lib</div>
<svg class="a" style="left:784px;top:700px;" width="17" height="17" viewBox="0 0 17 17"><circle cx="8.5" cy="8.5" r="7.2" fill="none" stroke="#e8e8f0" stroke-width="2.6" stroke-dasharray="2.2 1.5"/><circle cx="8.5" cy="8.5" r="5.5" fill="#2c2a5a"/><path d="M3.5 7.5H13.5M3.5 9.5H13.5" stroke="#f4f4f8" stroke-width="0.9"/></svg>
<div class="t" style="left:807.70px;top:701.65px;font-size:14px;line-height:14px;color:#dfdbd2;font-weight:400;font-style:normal;font-family:'Liberation Sans';letter-spacing:-0.174px;">Java EE - JavaScript/...</div>
<div class="a" style="left:1007px;top:699px;width:28px;height:21px;background:#e4967a"></div>
<svg class="a" style="left:1013px;top:701px;" width="17" height="17" viewBox="0 0 17 17"><rect x="0" y="0" width="17" height="17" fill="#5a3a7a" opacity="0.6"/></svg>
<svg class="a" style="left:1012px;top:701px;" width="17" height="17" viewBox="0 0 17 17"><circle cx="8.5" cy="8.5" r="7.2" fill="none" stroke="#e8e8f0" stroke-width="2.6" stroke-dasharray="2.2 1.5"/><circle cx="8.5" cy="8.5" r="5.5" fill="#2c2a5a"/><path d="M3.5 7.5H13.5M3.5 9.5H13.5" stroke="#f4f4f8" stroke-width="0.9"/></svg>
<svg class="a" style="left:161px;top:75px;" width="3" height="21" viewBox="0 0 3 21"><path d="M1.5 0V21" stroke="#8a8a86" stroke-width="1.6" stroke-dasharray="1.6 2.4"/></svg>
<svg class="a" style="left:171px;top:77px;" width="16" height="15" viewBox="0 0 16 15"><rect x="0.5" y="2.5" width="13" height="11" fill="#fbfbf0" stroke="#6a7a6a"/><rect x="1" y="3" width="12" height="3" fill="#5a8ac8"/><path d="M1 6H13V13H1Z" fill="url(#gnew)"/><defs><linearGradient id="gnew" x1="0" y1="0" x2="1" y2="1"><stop offset="0" stop-color="#dbeaf8"/><stop offset="1" stop-color="#fffbe0"/></linearGradient></defs><circle cx="12.5" cy="3" r="2.6" fill="#f8e070" stroke="#c0a030" stroke-width="0.8"/></svg>
<svg class="a" style="left:197px;top:82px;" width="9" height="6" viewBox="0 0 9 6"><path d="M0.5 0.5H8.5L4.5 5.5Z" fill="#6e6e6a"/></svg>
<svg class="a" style="left:217px;top:78px;" width="14" height="14" viewBox="0 0 14 14"><rect x="0.5" y="0.5" width="13" height="13" rx="1" fill="#ecece9" stroke="#cfcfcc"/><rect x="3" y="1" width="8" height="4" fill="#f6f6f4" stroke="#d4d4d0"/><rect x="3.5" y="8.5" width="7" height="5" fill="#e4e4e0" stroke="#d4d4d0"/></svg>
<svg class="a" style="left:243px;top:77px;" width="15" height="15" viewBox="0 0 15 15"><rect x="0.5" y="0.5" width="10" height="10" rx="1" fill="#efefec" stroke="#d8d8d4"/><rect x="4.5" y="4.5" width="10" height="10" rx="1" fill="#ecece9" stroke="#cfcfcc"/><rect x="7.5" y="10.5" width="4" height="4" fill="#e4e4e0" stroke="#d4d4d0"/></svg>
<svg class="a" style="left:268px;top:77px;" width="16" height="15" viewBox="0 0 16 15"><rect x="4.5" y="0.5" width="7" height="6" fill="#f8f8f8" stroke="#9aa8b8"/><rect x="0.5" y="5.5" width="15" height="7" rx="1.5" fill="#c8d8ea" stroke="#6a8ab0"/><rect x="0.5" y="11" width="15" height="3.5" rx="1" fill="#3a6ab0"/></svg>
<svg class="a" style="left:291px;top:75px;" width="3" height="21" viewBox="0 0 3 21"><path d="M1.5 0V21" stroke="#8a8a86" stroke-width="1.6" stroke-dasharray="1.6 2.4"/></svg>
<svg class="a" style="left:303px;top:78px;" width="14" height="13" viewBox="0 0 14 13"><circle cx="7" cy="7" r="4" fill="#7a9ad0" stroke="#3a5a9a"/><path d="M1 1L13 12.5" stroke="#1a3a70" stroke-width="1.6"/></svg>
<div class="a" style="left:327px;top:76px;width:1px;height:20px;background:#d8d8d4"></div>
<svg class="a" style="left:340px;top:78px;" width="15" height="13" viewBox="0 0 15 13"><rect x="0.5" y="1.5" width="3" height="10" fill="#ececea" stroke="#d2d2ce"/><path d="M5.5 1.5L14 6.5L5.5 11.5Z" fill="#ececea" stroke="#d2d2ce"/></svg>
<svg class="a" style="left:367px;top:78px;" width="12" height="13" viewBox="0 0 12 13"><rect x="0.5" y="0.5" width="4" height="12" fill="#ececea" stroke="#d2d2ce"/><rect x="7.5" y="0.5" width="4" height="12" fill="#ececea" stroke="#d2d2ce"/></svg>
<svg class="a" style="left:393px;top:78px;" width="12" height="12" viewBox="0 0 12 12"><rect x="0.5" y="0.5" width="11" height="11" fill="#dcdcd8" stroke="#d0d0cc"/><rect x="2" y="2" width="8" height="8" fill="#d4d4d0"/></svg>
<svg class="a" style="left:418px;top:77px;" width="14" height="14" viewBox="0 0 14 14"><circle cx="2.5" cy="11.5" r="2" fill="#d4d4d0"/><circle cx="11.5" cy="2.5" r="2" fill="#e4e4e0" stroke="#ccc"/><path d="M2.5 11V3L8.5 11L11 4" stroke="#cfcfcb" stroke-width="1.2" fill="none"/></svg>
<svg class="a" style="left:444px;top:78px;" width="16" height="13" viewBox="0 0 16 13"><path d="M2 4H8M6 4V9L9 11" stroke="#d4d4d0" fill="none"/><path d="M0 12H3M12 12H15" stroke="#c8c8c4" stroke-width="1.5"/></svg>
<svg class="a" style="left:470px;top:78px;" width="16" height="13" viewBox="0 0 16 13"><path d="M2 6Q8 0 13 5L11 7" stroke="#d4d4d0" fill="none" stroke-width="1.3"/><circle cx="9" cy="9" r="2.5" fill="none" stroke="#d4d4d0"/><path d="M2 12H5" stroke="#c8c8c4" stroke-width="1.5"/></svg>
<svg class="a" style="left:497px;top:78px;" width="16" height="13" viewBox="0 0 16 13"><path d="M8 11V4Q8 1 12 2L13 5" stroke="#d4d4d0" fill="none" stroke-width="1.3"/><path d="M1 12H4M11 12H15" stroke="#c8c8c4" stroke-width="1.5"/></svg>
<div class="a" style="left:522px;top:76px;width:1px;height:20px;background:#d8d8d4"></div>
<svg class="a" style="left:534px;top:77px;" width="16" height="15" viewBox="0 0 16 15"><path d="M0 1.5H11M0 4.5H11M0 7.5H11M0 10.5H8" stroke="#c4c4c0" stroke-width="1.6"/><path d="M9 9L13 12L9 14" stroke="#d0d0cc" fill="none" stroke-width="1.2"/></svg>
<svg class="a" style="left:559px;top:76px;" width="17" height="17" viewBox="0 0 17 17"><path d="M1 4H11L13 1V8L11 5H3" fill="#f0c84a" stroke="#b08a20" stroke-width="0.8"/><path d="M5 5V11H3L6.5 14.5L10 11H8V5Z" fill="#f4d058" stroke="#b08a20" stroke-width="0.8"/><path d="M0 16H4M12 16H16" stroke="#2a4a8a" stroke-width="1.6"/></svg>
<svg class="a" style="left:583px;top:75px;" width="3" height="21" viewBox="0 0 3 21"><path d="M1.5 0V21" stroke="#8a8a86" stroke-width="1.6" stroke-dasharray="1.6 2.4"/></svg>
<svg class="a" style="left:594px;top:77px;" width="14" height="15" viewBox="0 0 14 15"><ellipse cx="7" cy="8.5" rx="4" ry="5" fill="#5aa85a" stroke="#2a6a3a"/><circle cx="7" cy="3" r="2.3" fill="#4a9a5a" stroke="#2a6a3a"/><path d="M1 4L3.5 6M13 4L10.5 6M0.5 9H3M13.5 9H11M1 14L3.5 12M13 14L10.5 12" stroke="#2a6a3a" stroke-width="1.2"/><ellipse cx="6" cy="8" rx="1.5" ry="2" fill="#a8e0a0"/></svg>
<svg class="a" style="left:618px;top:82px;" width="9" height="6" viewBox="0 0 9 6"><path d="M0.5 0.5H8.5L4.5 5.5Z" fill="#6e6e6a"/></svg>
<svg class="a" style="left:638px;top:77px;" width="15" height="15" viewBox="0 0 15 15"><circle cx="7.5" cy="7.5" r="7" fill="#3aa03a" stroke="#1a6a1a"/><circle cx="7.5" cy="6" r="5" fill="#5ac05a"/><path d="M5.5 3.8L11 7.5L5.5 11.2Z" fill="#fff"/></svg>
<svg class="a" style="left:664px;top:82px;" width="9" height="6" viewBox="0 0 9 6"><path d="M0.5 0.5H8.5L4.5 5.5Z" fill="#6e6e6a"/></svg>
<svg class="a" style="left:682px;top:76px;" width="17" height="17" viewBox="0 0 17 17"><circle cx="6.5" cy="6.5" r="6" fill="#3aa03a" stroke="#1a6a1a"/><path d="M5 3.5L9.5 6.5L5 9.5Z" fill="#fff"/><rect x="8" y="10" width="8.5" height="6" rx="1" fill="#d02a2a" stroke="#8a1010"/><path d="M10.5 10V8.5H14V10" stroke="#8a1010" fill="none"/><path d="M8 12.5H16.5" stroke="#f4a0a0"/></svg>
<svg class="a" style="left:709px;top:82px;" width="9" height="6" viewBox="0 0 9 6"><path d="M0.5 0.5H8.5L4.5 5.5Z" fill="#6e6e6a"/></svg>
<svg class="a" style="left:724px;top:75px;" width="3" height="21" viewBox="0 0 3 21"><path d="M1.5 0V21" stroke="#8a8a86" stroke-width="1.6" stroke-dasharray="1.6 2.4"/></svg>
<svg class="a" style="left:735px;top:76px;" width="16" height="17" viewBox="0 0 16 17"><rect x="0.5" y="2.5" width="11" height="12" fill="#eef2f6" stroke="#8a9ab0"/><rect x="0.5" y="2.5" width="11" height="2.5" fill="#e8c860"/><circle cx="9.5" cy="11" r="5" fill="#3a7ab8" stroke="#2a5a8a"/><path d="M6 9Q9 11 8 15M11 7Q10 10 14 11" stroke="#6ac06a" stroke-width="1.5" fill="none"/><path d="M12.5 1V6M10 3.5H15" stroke="#e0b020" stroke-width="1.6"/></svg>
<svg class="a" style="left:760px;top:82px;" width="9" height="6" viewBox="0 0 9 6"><path d="M0.5 0.5H8.5L4.5 5.5Z" fill="#6e6e6a"/></svg>
<svg class="a" style="left:780px;top:76px;" width="16" height="16" viewBox="0 0 16 16"><circle cx="7" cy="9" r="6.5" fill="#4a90d0" stroke="#2a5a9a"/><text x="3.2" y="13.5" font-size="11" font-weight="bold" font-family="Liberation Sans" fill="#fff">S</text><path d="M13 1V6M10.5 3.5H15.5" stroke="#e0b020" stroke-width="1.6"/></svg>
<svg class="a" style="left:805px;top:82px;" width="9" height="6" viewBox="0 0 9 6"><path d="M0.5 0.5H8.5L4.5 5.5Z" fill="#6e6e6a"/></svg>
<svg class="a" style="left:821px;top:75px;" width="3" height="21" viewBox="0 0 3 21"><path d="M1.5 0V21" stroke="#8a8a86" stroke-width="1.6" stroke-dasharray="1.6 2.4"/></svg>
<svg class="a" style="left:831px;top:76px;" width="16" height="16" viewBox="0 0 16 16"><path d="M0.5 8.5H11V15.5H0.5Z" fill="#f0cc60" stroke="#a08030"/><path d="M0.5 15.5L3 10H15.5L12 15.5Z" fill="#f8dc80" stroke="#a08030"/><circle cx="7" cy="5" r="4" fill="#5a4aa0"/><circle cx="11.5" cy="7.5" r="3.8" fill="#4aaa4a"/></svg>
<svg class="a" style="left:857px;top:77px;" width="16" height="14" viewBox="0 0 16 14"><rect x="5" y="0.5" width="8" height="7" fill="#f8f8f6" stroke="#9aa0a8"/><path d="M0.5 5.5H13V13.5H0.5Z" fill="#f0cc60" stroke="#a08030"/><path d="M0.5 13.5L3 8.5H15.5L13 13.5Z" fill="#f8dc80" stroke="#a08030"/></svg>
<svg class="a" style="left:884px;top:77px;" width="16" height="16" viewBox="0 0 16 16"><path d="M9 1L15 7L7 14L1.5 15L2.5 9Z" fill="#f8ecb0" stroke="#c09838"/><path d="M4 8L10 14L7 15L1.5 15L2 10Z" fill="#b0a898"/><path d="M2 12L4 14" stroke="#f8f8f0" stroke-width="2"/></svg>
<svg class="a" style="left:910px;top:82px;" width="9" height="6" viewBox="0 0 9 6"><path d="M0.5 0.5H8.5L4.5 5.5Z" fill="#6e6e6a"/></svg>
<svg class="a" style="left:925px;top:75px;" width="3" height="21" viewBox="0 0 3 21"><path d="M1.5 0V21" stroke="#8a8a86" stroke-width="1.6" stroke-dasharray="1.6 2.4"/></svg>
<svg class="a" style="left:937px;top:77px;" width="13" height="13" viewBox="0 0 13 13"><circle cx="6.5" cy="6.5" r="6" fill="#3a78b8" stroke="#2a5a8a"/><path d="M3 4Q6 6 5 11M8 2Q7 6 11 7" stroke="#8ad06a" stroke-width="1.6" fill="none"/><circle cx="5" cy="4" r="1.5" fill="#f0e060"/></svg>
<svg class="a" style="left:958px;top:75px;" width="3" height="21" viewBox="0 0 3 21"><path d="M1.5 0V21" stroke="#8a8a86" stroke-width="1.6" stroke-dasharray="1.6 2.4"/></svg>
<svg class="a" style="left:968px;top:77px;" width="16" height="16" viewBox="0 0 16 16"><circle cx="10.5" cy="5" r="4.5" fill="#8ab8a0" stroke="#4a7a6a"/><path d="M1 13.5L6 4L11 13.5Z" fill="#c8daf0" stroke="#2a4a8a"/><path d="M0.5 14H9" stroke="#1a2a6a" stroke-width="1.6"/><path d="M9 9V16L15 12.5Z" fill="#3aa03a"/></svg>
<svg class="a" style="left:161px;top:107px;" width="3" height="20" viewBox="0 0 3 20"><path d="M1.5 0V20" stroke="#8a8a86" stroke-width="1.6" stroke-dasharray="1.6 2.4"/></svg>
<svg class="a" style="left:171px;top:108px;" width="15" height="18" viewBox="0 0 15 18"><rect x="6.5" y="2.5" width="8" height="14" fill="#f4f6f8" stroke="#b8c4d0"/><path d="M8 5H13M8 7H13M8 9H13M8 11H13M8 13H13" stroke="#c0ccd8"/><rect x="6" y="13" width="5" height="3" fill="#2a4a9a"/><path d="M3 0.5V6H0.5L5 11L9.5 6H7V0.5Z" fill="#f8d860" stroke="#b08a20" stroke-width="0.9"/></svg>
<svg class="a" style="left:197px;top:114px;" width="9" height="6" viewBox="0 0 9 6"><path d="M0.5 0.5H8.5L4.5 5.5Z" fill="#6e6e6a"/></svg>
<svg class="a" style="left:216px;top:107px;" width="15" height="19" viewBox="0 0 15 19"><rect x="6.5" y="1.5" width="8" height="14" fill="#f4f6f8" stroke="#b8c4d0"/><path d="M8 5H13M8 7H13M8 9H13M8 11H13M8 13H13" stroke="#c0ccd8"/><rect x="6" y="2" width="5" height="3" fill="#2a4a9a"/><path d="M3 18.5V12.5H0.5L5 7.5L9.5 12.5H7V18.5Z" fill="#f8d860" stroke="#b08a20" stroke-width="0.9"/></svg>
<svg class="a" style="left:242px;top:114px;" width="9" height="6" viewBox="0 0 9 6"><path d="M0.5 0.5H8.5L4.5 5.5Z" fill="#6e6e6a"/></svg>
<svg class="a" style="left:261px;top:110px;" width="16" height="13" viewBox="0 0 16 13"><path d="M15.5 4H9V0.5L3 6.5L9 12.5V9H15.5Z" fill="#f8d860" stroke="#b08a20" stroke-width="0.9"/><path d="M1 1L5 5M5 1L1 5M3 0V6M0 3H6" stroke="#2a4a9a" stroke-width="0.9"/></svg>
<svg class="a" style="left:288px;top:110px;" width="14" height="13" viewBox="0 0 14 13"><path d="M13.5 4H7V0.5L0.8 6.5L7 12.5V9H13.5Z" fill="#f8d860" stroke="#b08a20" stroke-width="0.9"/></svg>
<svg class="a" style="left:313px;top:114px;" width="9" height="6" viewBox="0 0 9 6"><path d="M0.5 0.5H8.5L4.5 5.5Z" fill="#6e6e6a"/></svg>
<svg class="a" style="left:333px;top:110px;" width="14" height="13" viewBox="0 0 14 13"><path d="M0.5 4H7V0.5L13.2 6.5L7 12.5V9H0.5Z" fill="#f0f0ee" stroke="#d0d0cc" stroke-width="0.9"/></svg>
<svg class="a" style="left:357px;top:114px;" width="9" height="6" viewBox="0 0 9 6"><path d="M0.5 0.5H8.5L4.5 5.5Z" fill="#cfcfcb"/></svg>
<div class="a" style="left:872px;top:106px;width:106px;height:23px;background:#fff;border:1px solid #c8c8c4;border-radius:3px"></div>
<div class="t" style="left:876.30px;top:111.37px;font-size:13.5px;line-height:13.5px;color:#b4b4b0;font-weight:400;font-style:normal;font-family:'Liberation Sans';letter-spacing:0.000px;">Quick Access</div>
<svg class="a" style="left:984px;top:104px;" width="3" height="31" viewBox="0 0 3 31"><path d="M1.5 0V31" stroke="#8a8a86" stroke-width="1.6" stroke-dasharray="1.6 2.4"/></svg>
<div class="a" style="left:989px;top:98px;width:1px;height:37px;background:#d0d0cc"></div>
<svg class="a" style="left:1002px;top:110px;" width="15" height="15" viewBox="0 0 15 15"><rect x="0.5" y="3.5" width="11" height="11" fill="#f0f4f8" stroke="#5a7aa0"/><path d="M0.5 7.5H11.5M5.5 3.5V14.5" stroke="#5a7aa0"/><rect x="1" y="4" width="10" height="3" fill="#7aa0d0"/><path d="M11 0.5L12.5 3L15 4L12.5 5L11 7.5L9.5 5L7 4L9.5 3Z" fill="#f8e070" stroke="#c0a030" stroke-width="0.6"/></svg>
<div class="a" style="left:1030px;top:112px;width:1px;height:16px;background:#d4d4d0"></div>
<div class="a" style="left:1038px;top:106px;width:73px;height:25px;background:linear-gradient(#f4f4f2,#e4e4e1);border:1px solid #b8b8b4;border-radius:4px"></div>
<svg class="a" style="left:1043px;top:110px;" width="14" height="16" viewBox="0 0 14 16"><rect x="0.5" y="4.5" width="4" height="4" fill="#f8e070" stroke="#907020"/><rect x="7.5" y="11.5" width="4" height="4" fill="#f8e070" stroke="#907020"/><path d="M2.5 8.5V13.5H7.5" stroke="#606060" fill="none"/><ellipse cx="9" cy="4" rx="4.5" ry="3.5" fill="#8a5a3a" transform="rotate(-30 9 4)"/><path d="M6 6L12 2" stroke="#c8a080" stroke-width="0.8"/></svg>
<div class="t" style="left:1061.00px;top:113.60px;font-size:13px;line-height:13px;color:#484848;font-weight:400;font-style:normal;font-family:'Liberation Sans';letter-spacing:-0.383px;">Java EE</div>
<svg class="a" style="left:1090px;top:146px;" width="24" height="2" viewBox="0 0 24 2"><path d="M0 1H24" stroke="#a8a8a4" stroke-width="1.2" stroke-dasharray="2 4"/></svg>
<svg class="a" style="left:1096px;top:159px;" width="10" height="9" viewBox="0 0 10 9"><rect x="3" y="0.5" width="6.5" height="5" fill="none" stroke="#333" stroke-width="1"/><rect x="0.5" y="3.5" width="6.5" height="5" fill="#e9e9e6" stroke="#333" stroke-width="1"/><path d="M0.5 4.5H7M3 1.5H9.5" stroke="#333" stroke-width="1.5"/></svg>
<svg class="a" style="left:1093px;top:181px;" width="16" height="16" viewBox="0 0 16 16"><circle cx="8" cy="8" r="7.3" fill="#f0f0e8" stroke="#8a8a80"/><circle cx="8" cy="5" r="2.8" fill="#40a8e0"/><circle cx="5" cy="10" r="2.8" fill="#e8d040"/><circle cx="11" cy="10" r="2.8" fill="#40b040"/></svg>
<svg class="a" style="left:1090px;top:214px;" width="24" height="2" viewBox="0 0 24 2"><path d="M0 1H24" stroke="#a8a8a4" stroke-width="1.2" stroke-dasharray="2 4"/></svg>
<svg class="a" style="left:1096px;top:227px;" width="10" height="9" viewBox="0 0 10 9"><rect x="3" y="0.5" width="6.5" height="5" fill="none" stroke="#333" stroke-width="1"/><rect x="0.5" y="3.5" width="6.5" height="5" fill="#e9e9e6" stroke="#333" stroke-width="1"/><path d="M0.5 4.5H7M3 1.5H9.5" stroke="#333" stroke-width="1.5"/></svg>
<svg class="a" style="left:1094px;top:250px;" width="14" height="15" viewBox="0 0 14 15"><rect x="0.5" y="0.5" width="5" height="5" fill="#dbeaf8" stroke="#2a7ac8"/><rect x="0.5" y="9.5" width="5" height="5" fill="#dbeaf8" stroke="#2a7ac8"/><rect x="7" y="6" width="3" height="3" fill="#2a7ac8"/><path d="M7 2.5H13.5M11 7.5H13.5M7 12H13.5M3 5.5V9.5" stroke="#2a7ac8"/></svg>
<svg class="a" style="left:1095px;top:276px;" width="12" height="16" viewBox="0 0 12 16"><path d="M0.5 0.5H11.5V15.5L6 13L0.5 15.5Z" fill="#e4e8ec" stroke="#6a7a8a"/><path d="M2.5 3H9.5M2.5 5H9.5M2.5 7H9.5M2.5 9H9.5M2.5 11H9.5" stroke="#7a8a9a"/></svg>
<svg class="a" style="left:924px;top:5px;" width="20" height="14" viewBox="0 0 20 14"><rect x="0" y="0.5" width="13" height="13" rx="2" fill="#dcdad4"/><path d="M13 4L19.5 0.5V13.5L13 10Z" fill="#dcdad4"/><circle cx="6.5" cy="7" r="3.6" fill="#e02828"/></svg>
<svg class="a" style="left:957px;top:4px;" width="19" height="15" viewBox="0 0 19 15"><path d="M1 5.5Q9.5 -2 18 5.5" stroke="#dfdbd2" stroke-width="1.6" fill="none"/><path d="M3.8 8.3Q9.5 3.3 15.2 8.3" stroke="#dfdbd2" stroke-width="1.6" fill="none"/><path d="M6.5 11Q9.5 8.5 12.5 11" stroke="#dfdbd2" stroke-width="1.6" fill="none"/><circle cx="9.5" cy="13" r="1.4" fill="#dfdbd2"/></svg>
<div class="a" style="left:989px;top:3px;width:21px;height:17px;background:#dfdbd2"></div>
<div class="t" style="left:991.50px;top:5.07px;font-size:13.5px;line-height:13.5px;color:#3c3b37;font-weight:400;font-style:normal;font-family:'Liberation Sans';letter-spacing:0.500px;">Es</div>
<svg class="a" style="left:1024px;top:5px;" width="24" height="13" viewBox="0 0 24 13"><rect x="0.8" y="0.8" width="19.4" height="11.4" rx="2" fill="#7a7974" stroke="#dfdbd2" stroke-width="1.5"/><rect x="20.5" y="4" width="2.5" height="5" fill="#dfdbd2"/><path d="M12 2.5L8 7H11L9 10.5L13.5 5.5H10.5Z" fill="#dfdbd2"/></svg>
<svg class="a" style="left:1059px;top:4px;" width="20" height="16" viewBox="0 0 20 16"><path d="M1 5H4L8.5 1V15L4 11H1Z" fill="#dfdbd2"/><path d="M11 5Q13 8 11 11" stroke="#dfdbd2" stroke-width="1.4" fill="none"/><path d="M13.5 3Q17 8 13.5 13" stroke="#c8c4bc" stroke-width="1.3" fill="none"/><path d="M16 1Q21 8 16 15" stroke="#a8a49c" stroke-width="1.3" fill="none"/></svg>
<svg class="a" style="left:1093px;top:2px;" width="20" height="20" viewBox="0 0 20 20"><circle cx="10" cy="10.5" r="7.2" fill="none" stroke="#dfdbd2" stroke-width="3.2" stroke-dasharray="3 2.65"/><circle cx="10" cy="10.5" r="6" fill="none" stroke="#dfdbd2" stroke-width="2.2"/><circle cx="10" cy="10.5" r="3.6" fill="none" stroke="#3f3e39" stroke-width="1.2"/><path d="M10 0.5V10" stroke="#46453f" stroke-width="4.2"/><path d="M10 1V9.5" stroke="#dfdbd2" stroke-width="2"/></svg>
<div class="a" style="left:160px;top:48px;width:1px;height:649px;background:#f2f2ef"></div>
</body></html>
